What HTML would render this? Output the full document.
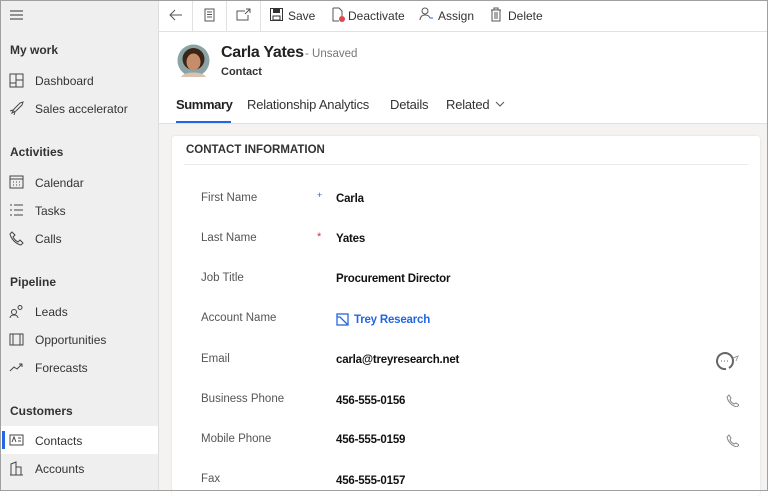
<!DOCTYPE html>
<html><head><meta charset="utf-8"><style>
*{box-sizing:border-box;margin:0;padding:0}
body{width:768px;height:491px;overflow:hidden;font-family:"Liberation Sans",sans-serif;color:#222;background:#fff;position:relative;font-size:12px}
.frame{position:absolute;left:0;top:0;width:768px;height:491px;border:1px solid #a0a0a0;z-index:50;pointer-events:none}
.side{position:absolute;left:0;top:0;width:159px;height:491px;background:#efefef;border-right:1px solid #ddd}
.a{position:absolute;white-space:nowrap}
.sh{font-weight:bold;font-size:12px;color:#333;left:10px}
.si{left:35px;font-size:12px;color:#333}
.ic{position:absolute;left:9px}
.main{position:absolute;left:159px;top:0;right:0;bottom:0;background:#f4f3f2}
.hdr{position:absolute;left:159px;top:0;right:0;height:124px;background:#fff;border-bottom:1px solid #e1e1e1}
.tb{position:absolute;left:159px;top:0;right:0;height:32px;border-bottom:1px solid #e1e1e1}
.sep{position:absolute;top:0;width:1px;height:31px;background:#e1e1e1}
.card{position:absolute;left:172px;top:136px;width:588px;height:360px;background:#fff;border-radius:3px;box-shadow:0 0 2px rgba(0,0,0,.1)}
.lb{left:201px;color:#555;font-size:11.5px}
.v{left:336px;font-weight:bold;font-size:11.5px;color:#111;letter-spacing:-0.2px}
.tab{font-size:13px;color:#333;letter-spacing:-0.2px}
</style></head><body>
<div class="side"></div>
<div class="main"></div>
<div class="hdr"></div>
<div class="tb"></div>
<div class="sep" style="left:192px"></div><div class="sep" style="left:226px"></div><div class="sep" style="left:260px"></div>

<svg class="ic" style="left:10px;top:10px" width="14" height="10"><path d="M0 1h13M0 5h13M0 9h13" stroke="#333" stroke-width="1"/></svg>
<div class="a sh" style="top:43px">My work</div>
<svg class="ic" style="top:73px" width="15" height="15" fill="none" stroke="#444"><rect x="1" y="1" width="13" height="13"/><path d="M7 1v13M7 7h7M1 10h6"/></svg>
<div class="a si" style="top:74px">Dashboard</div>
<svg class="ic" style="top:101px" width="15" height="15" fill="none" stroke="#444"><path d="M3 12l2-4 6-6 3-1-1 3-6 6-4 2zM4 9l-3 1M6 11l-1 3"/></svg>
<div class="a si" style="top:102px">Sales accelerator</div>
<div class="a sh" style="top:145px">Activities</div>
<svg class="ic" style="top:175px" width="15" height="14" fill="none" stroke="#444"><rect x="1" y="1" width="13" height="12"/><path d="M1 4h13M4 7h1M7 7h1M10 7h1M4 10h1M7 10h1M10 10h1"/></svg>
<div class="a si" style="top:176px">Calendar</div>
<svg class="ic" style="top:203px" width="15" height="14" fill="none" stroke="#444"><path d="M1 2h2M5 2h9M1 7h2M5 7h9M1 12h2M5 12h9"/></svg>
<div class="a si" style="top:204px">Tasks</div>
<svg class="ic" style="top:231px" width="15" height="15" fill="none" stroke="#444"><path d="M3 1l3 3-2 2c1 2 3 4 5 5l2-2 3 3-2 2C7 13 2 8 1 3z"/></svg>
<div class="a si" style="top:232px">Calls</div>
<div class="a sh" style="top:275px">Pipeline</div>
<svg class="ic" style="top:304px" width="15" height="15" fill="none" stroke="#444"><circle cx="5" cy="8" r="2.5"/><path d="M1 14c0-2 2-3 4-3s4 1 4 3"/><circle cx="11" cy="3.5" r="2"/></svg>
<div class="a si" style="top:305px">Leads</div>
<svg class="ic" style="top:332px" width="15" height="14" fill="none" stroke="#444"><rect x="1" y="2" width="13" height="11"/><path d="M4 2v11M11 2v11"/></svg>
<div class="a si" style="top:333px">Opportunities</div>
<svg class="ic" style="top:361px" width="15" height="12" fill="none" stroke="#444"><path d="M1 10l4-4 3 2 5-5M10 3h3v3"/></svg>
<div class="a si" style="top:361px">Forecasts</div>
<div class="a sh" style="top:404px">Customers</div>
<div style="position:absolute;left:0;top:426px;width:158px;height:28px;background:#fff"></div>
<div style="position:absolute;left:2px;top:431px;width:3px;height:18px;background:#2266e3"></div>
<svg class="ic" style="top:434px" width="15" height="12" fill="none" stroke="#444"><rect x="1" y="1" width="13" height="10"/><path d="M3 8l2-5 2 5M9 4h3M9 7h3"/></svg>
<div class="a si" style="top:434px">Contacts</div>
<svg class="ic" style="top:461px" width="15" height="15" fill="none" stroke="#444"><path d="M2 14V3l5-2v13M7 6h5v8M1 14h13"/></svg>
<div class="a si" style="top:462px">Accounts</div>

<svg class="a" style="left:169px;top:9px" width="14" height="12" fill="none" stroke="#555"><path d="M13 6H1M6 1L1 6l5 5"/></svg>
<svg class="a" style="left:204px;top:8px" width="11" height="14" fill="none" stroke="#555"><rect x="1" y="1" width="9" height="12"/><path d="M3 4h5M3 6.5h5M3 9h5"/></svg>
<svg class="a" style="left:236px;top:8px" width="15" height="13" fill="none" stroke="#555"><path d="M9 3H1v9h11V7M10 1h4v4M14 1l-5 5"/></svg>
<svg class="a" style="left:270px;top:8px" width="13" height="13"><rect x=".5" y=".5" width="12" height="12" fill="none" stroke="#333"/><rect x="3" y="1" width="7" height="4" fill="#333"/><rect x="3" y="8" width="7" height="4" fill="none" stroke="#333"/></svg>
<div class="a" style="left:288px;top:9px;color:#333">Save</div>
<svg class="a" style="left:332px;top:7px" width="13" height="16" fill="none" stroke="#555"><path d="M1 1h6l3 3v5M1 1v13h6"/><circle cx="10" cy="12" r="3" fill="#e0464e" stroke="none"/></svg>
<div class="a" style="left:348px;top:9px;color:#333">Deactivate</div>
<svg class="a" style="left:419px;top:7px" width="15" height="14" fill="none" stroke="#555"><circle cx="6" cy="4" r="3"/><path d="M1 13c0-3 2-5 5-5s4 1 5 3"/><path d="M11 11h3" stroke="#2266e3"/></svg>
<div class="a" style="left:438px;top:9px;color:#333">Assign</div>
<svg class="a" style="left:490px;top:7px" width="12" height="15" fill="none" stroke="#555"><path d="M1 3h10M4 3V1h4v2M2 3v11h8V3M5 5v7M7 5v7"/></svg>
<div class="a" style="left:508px;top:9px;color:#333">Delete</div>

<svg class="a" style="left:177px;top:44px" width="33" height="33"><circle cx="16.5" cy="16.5" r="16" fill="#8aa4a6"/><circle cx="16.5" cy="15" r="11" fill="#3b2418"/><ellipse cx="16.5" cy="18" rx="7" ry="8.5" fill="#c68d6a"/><path d="M4 33c3-6 22-6 25 0z" fill="#d7c3b0"/></svg>
<div class="a" style="left:221px;top:44px;font-size:16px;font-weight:bold;color:#222;letter-spacing:-0.3px">Carla Yates</div>
<div class="a" style="left:305px;top:48px;font-size:11.5px;color:#777">- Unsaved</div>
<div class="a" style="left:221px;top:66px;font-size:11px;font-weight:bold;color:#333">Contact</div>
<div class="a" style="left:176px;top:97px;font-size:13px;font-weight:bold;color:#222;letter-spacing:-0.4px">Summary</div>
<div style="position:absolute;left:176px;top:121px;width:55px;height:2px;background:#2266e3"></div>
<div class="a tab" style="left:247px;top:97px">Relationship Analytics</div>
<div class="a tab" style="left:390px;top:97px">Details</div>
<div class="a tab" style="left:446px;top:97px">Related</div>
<svg class="a" style="left:495px;top:101px" width="10" height="6" fill="none" stroke="#555"><path d="M1 1l4 4 4-4"/></svg>

<div class="card"></div>
<div class="a" style="left:186px;top:144px;font-size:11.5px;font-weight:bold;color:#333">CONTACT INFORMATION</div>
<div style="position:absolute;left:184px;top:164px;width:564px;height:1px;background:#eaeaea"></div>
<div class="a lb" style="top:192px">First Name</div><div class="a" style="left:317px;top:190px;color:#2266e3;font-size:9px">+</div><div class="a v" style="top:193px">Carla</div>
<div class="a lb" style="top:232px">Last Name</div><div class="a" style="left:317px;top:231px;color:#d13438;font-size:11px">*</div><div class="a v" style="top:233px">Yates</div>
<div class="a lb" style="top:272px">Job Title</div><div class="a v" style="top:273px">Procurement Director</div>
<div class="a lb" style="top:312px">Account Name</div>
<svg class="a" style="left:336px;top:313px" width="13" height="13" fill="none" stroke="#2266e3" stroke-width="1.3"><rect x="1" y="1" width="11" height="11"/><path d="M1 4h3l8 8"/></svg>
<div class="a" style="left:354px;top:314px;font-weight:bold;font-size:11.5px;color:#2266e3;letter-spacing:-0.2px">Trey Research</div>
<div class="a lb" style="top:353px">Email</div><div class="a v" style="top:354px">carla@treyresearch.net</div>
<svg class="a" style="left:713px;top:350px" width="26" height="22" fill="none" stroke="#666" stroke-width="2"><path d="M13 19A8 8 0 1 1 16 18"/><path d="M8 11h1M11 11h1M14 11h1" stroke-width="1"/><path d="M20 8l5-2-2 5" stroke-width="1" stroke="#999"/></svg>
<div class="a lb" style="top:393px">Business Phone</div><div class="a v" style="top:395px">456-555-0156</div>
<svg class="a" style="left:726px;top:394px" width="13" height="13" fill="none" stroke="#888"><path d="M3 1l2 3-1 2c1 2 2 3 4 4l2-1 3 2-2 2C6 12 2 8 1 3z"/></svg>
<div class="a lb" style="top:433px">Mobile Phone</div><div class="a v" style="top:434px">456-555-0159</div>
<svg class="a" style="left:726px;top:434px" width="13" height="13" fill="none" stroke="#888"><path d="M3 1l2 3-1 2c1 2 2 3 4 4l2-1 3 2-2 2C6 12 2 8 1 3z"/></svg>
<div class="a lb" style="top:473px">Fax</div><div class="a v" style="top:475px">456-555-0157</div>
<div class="frame"></div>
</body></html>
